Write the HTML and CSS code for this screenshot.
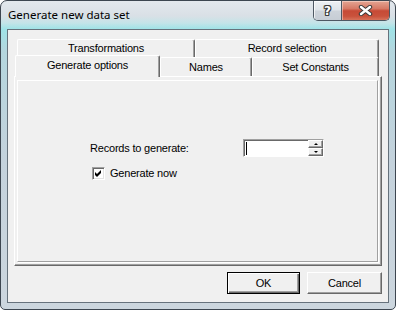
FILE: index.html
```html
<!DOCTYPE html>
<html>
<head>
<meta charset="utf-8">
<link rel="stylesheet" href="styles.css">
</head>
<body>
<div class="window">
  <div class="titlebar">
    <span class="title">Generate new data set</span>
    <div class="caps">
      <div class="cap cap-help"><span class="qmark">?</span></div>
      <div class="cap cap-close">
        <svg width="15" height="11" viewBox="0 0 15 11">
          <path d="M3 2 L12 9 M12 2 L3 9" stroke="#3b3b3b" stroke-width="4.4" stroke-linecap="round" fill="none"/>
          <path d="M3 2 L12 9 M12 2 L3 9" stroke="#ffffff" stroke-width="2.4" stroke-linecap="round" fill="none"/>
        </svg>
      </div>
    </div>
  </div>
  <div class="client">
    <div class="tabrow back">
      <div class="tab t-transf">Transformations</div>
      <div class="tab t-recsel">Record selection</div>
    </div>
    <div class="tabrow front">
      <div class="tab sel t-gen">Generate options</div>
      <div class="tab t-names">Names</div>
      <div class="tab t-setc">Set Constants</div>
    </div>
    <div class="page">
      <div class="inner">
        <div class="row rec-row">
          <span class="lbl">Records to generate:</span>
          <div class="spin">
            <span class="caret"></span>
            <div class="spinbtns">
              <div class="sbtn"><span class="arr up"></span></div>
              <div class="sbtn"><span class="arr down"></span></div>
            </div>
          </div>
        </div>
        <div class="row chk-row">
          <div class="chk">
            <svg width="7" height="7" viewBox="0 0 7 7"><path d="M0 2 L2 4 L6 0 L6 3 L2 7 L0 5 Z" fill="#000"/></svg>
          </div>
          <span class="chk-lbl">Generate now</span>
        </div>
      </div>
    </div>
    <div class="buttons">
      <div class="btn ok">OK</div>
      <div class="btn cancel">Cancel</div>
    </div>
  </div>
</div>
</body>
</html>
```

FILE: styles.css
```css
* { box-sizing: border-box; }
html, body { margin: 0; padding: 0; }
body {
  width: 396px;
  height: 310px;
  overflow: hidden;
  background: #ffffff;
  font-family: "Liberation Sans", Arial, sans-serif;
  font-size: 11px;
  letter-spacing: -0.2px;
  color: #000;
}
.window {
  width: 396px;
  height: 310px;
  border: 1px solid #3d4650;
  border-radius: 7px 7px 5px 5px;
  background: linear-gradient(to bottom, #e3e8ed 0, #d9e0e6 15px, #c4e4e8 22px, #9fe3e7 28px, #b4d6de 50px, #c4d2dc 160px, #ccd6de 100%);
  display: flex;
  flex-direction: column;
  overflow: hidden;
}
.titlebar {
  height: 28px;
  flex: none;
  display: flex;
  align-items: flex-start;
}
.title {
  margin: 6px 0 0 7px;
  font-family: "Noto Sans", "Open Sans", sans-serif;
  font-size: 11.5px;
  letter-spacing: 0;
  line-height: 16px;
  color: #000;
}
.caps {
  margin-left: auto;
  margin-right: 5px;
  display: flex;
  height: 20px;
  border: 1px solid #4e5863;
  border-top: none;
  border-radius: 0 0 5px 5px;
  overflow: hidden;
}
.cap {
  height: 19px;
  display: flex;
  align-items: center;
  justify-content: center;
}
.cap-help {
  width: 28px;
  border-right: 1px solid #4e5863;
  background: linear-gradient(to bottom, #eef1f4 0, #e0e5ea 45%, #cdd3da 55%, #c6cdd5 100%);
  box-shadow: inset 1px 1px rgba(255,255,255,0.7);
}
.qmark {
  font-family: "DejaVu Sans", sans-serif;
  font-weight: bold;
  font-size: 12px;
  line-height: 12px;
  color: #fff;
  text-shadow: -1px 0 #3b3b3b, 1px 0 #3b3b3b, 0 -1px #3b3b3b, 0 1px #3b3b3b, 1px 1px #3b3b3b, -1px -1px #3b3b3b, 1px -1px #3b3b3b, -1px 1px #3b3b3b;
}
.cap-close {
  width: 47px;
  background: linear-gradient(to bottom, #e4a593 0, #d77a66 40%, #c74a36 52%, #c9523c 80%, #d7725a 100%);
  box-shadow: inset 1px 1px rgba(255,230,220,0.5);
}
.client {
  margin: 0 6px;
  height: 274px;
  flex: none;
  border: 1px solid #66727c;
  background: #f0f0f0;
  padding: 9px 6px 0 6px;
  display: flex;
  flex-direction: column;
}
.tabrow {
  display: flex;
  position: relative;
}
.tabrow.back {
  height: 20px;
  margin: 0 0 -4px 3px;
  z-index: 1;
}
.tabrow.front {
  height: 22px;
  margin: 0 0 -1px 1px;
  z-index: 3;
  align-items: flex-start;
}
.tab {
  height: 20px;
  background: #f0f0f0;
  border-top: 1px solid #fff;
  border-left: 1px solid #fff;
  border-right: 1px solid #696969;
  box-shadow: inset -1px 0 #a0a0a0;
  border-radius: 2px 2px 0 0;
  text-align: center;
  padding-top: 1px;
  line-height: 15px;
  white-space: nowrap;
}
.front .tab {
  margin-top: 2px;
  height: 19px;
  padding-top: 2px;
}
.front .tab.sel {
  margin-top: 0;
  height: 22px;
  padding-top: 2px;
}
.t-transf { width: 178px; }
.t-recsel { width: 184px; }
.t-gen { width: 145px; }
.t-names { width: 92px; }
.t-setc { width: 127px; }
.page {
  height: 190px;
  flex: none;
  position: relative;
  z-index: 2;
  border-top: 1px solid #fff;
  border-left: 1px solid #fff;
  border-right: 1px solid #696969;
  border-bottom: 1px solid #696969;
  box-shadow: inset -1px -1px #a0a0a0;
  padding: 3px 3px 3px 2px;
  display: flex;
}
.inner {
  flex: 1;
  border-top: 1px solid #fff;
  border-left: 1px solid #fff;
  border-right: 1px solid #a0a0a0;
  border-bottom: 1px solid #a0a0a0;
  box-shadow: 1px 1px #ffffff;
  padding-top: 58px;
  display: flex;
  flex-direction: column;
}
.row {
  display: flex;
  align-items: center;
}
.rec-row {
  padding-left: 72px;
  height: 18px;
}
.lbl {
  width: 153px;
  line-height: 14px;
}
.spin {
  width: 81px;
  height: 18px;
  background: #fff;
  border: 1px solid;
  border-color: #a0a0a0 #fff #fff #a0a0a0;
  box-shadow: inset 1px 1px #696969;
  display: flex;
}
.caret {
  width: 1px;
  height: 13px;
  background: #000;
  margin: 2px 0 0 2px;
}
.spinbtns {
  margin-left: auto;
  width: 15px;
  display: flex;
  flex-direction: column;
}
.sbtn {
  height: 8px;
  background: #f0f0f0;
  border-top: 1px solid #fff;
  border-left: 1px solid #fff;
  border-right: 1px solid #696969;
  border-bottom: 1px solid #696969;
  box-shadow: inset -1px -1px #a0a0a0;
  display: flex;
  align-items: center;
  justify-content: center;
}
.arr {
  width: 0;
  height: 0;
  border-left: 2px solid transparent;
  border-right: 2px solid transparent;
}
.arr.up { border-bottom: 2px solid #000; }
.arr.down { border-top: 2px solid #000; }
.chk-row {
  margin-top: 9px;
  padding-left: 74px;
}
.chk {
  width: 13px;
  height: 13px;
  background: #fff;
  border: 1px solid;
  border-color: #a0a0a0 #fff #fff #a0a0a0;
  box-shadow: inset 1px 1px #696969, inset -1px -1px #e3e3e3;
  display: flex;
  align-items: center;
  justify-content: center;
}
.chk svg { display: block; }
.chk-lbl {
  margin-left: 5px;
  line-height: 14px;
}
.buttons {
  margin-top: 6px;
  display: flex;
  justify-content: flex-end;
  gap: 7px;
}
.btn {
  height: 22px;
  background: #f0f0f0;
  display: flex;
  align-items: center;
  justify-content: center;
  border-top: 1px solid #fff;
  border-left: 1px solid #fff;
  border-right: 1px solid #696969;
  border-bottom: 1px solid #696969;
  box-shadow: inset -1px -1px #a0a0a0;
}
.btn.ok {
  width: 73px;
  border: 1px solid #000;
  box-shadow: inset 1px 1px #fff, inset -1px -1px #696969, inset -2px -2px #a0a0a0;
}
.btn.cancel { width: 75px; }
```
